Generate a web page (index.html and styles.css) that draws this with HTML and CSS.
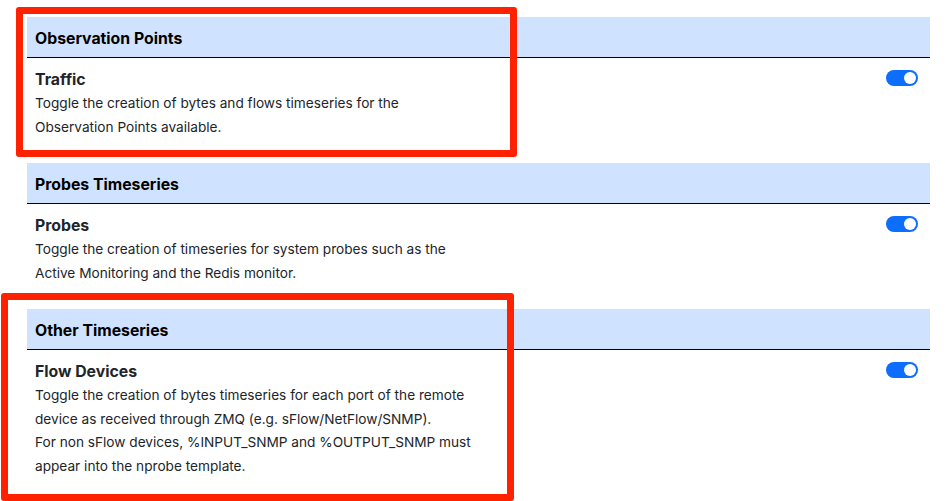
FILE: index.html
```html
<!DOCTYPE html>
<html>
<head>
<meta charset="utf-8">
<link rel="stylesheet" href="styles.css">
</head>
<body>
<div class="page">
  <div class="table">
    <section class="group">
      <div class="group-head">Observation Points</div>
      <div class="pref">
        <div class="pref-text">
          <div class="pref-title">Traffic</div>
          <div class="pref-desc">Toggle the creation of bytes and flows timeseries for the<br>Observation Points available.</div>
        </div>
        <span class="switch"><span class="knob"></span></span>
      </div>
    </section>
    <section class="group">
      <div class="group-head">Probes Timeseries</div>
      <div class="pref">
        <div class="pref-text">
          <div class="pref-title">Probes</div>
          <div class="pref-desc">Toggle the creation of timeseries for system probes such as the<br>Active Monitoring and the Redis monitor.</div>
        </div>
        <span class="switch"><span class="knob"></span></span>
      </div>
    </section>
    <section class="group">
      <div class="group-head">Other Timeseries</div>
      <div class="pref">
        <div class="pref-text">
          <div class="pref-title">Flow Devices</div>
          <div class="pref-desc">Toggle the creation of bytes timeseries for each port of the remote<br>device as received through ZMQ (e.g. sFlow/NetFlow/SNMP).<br>For non sFlow devices, %INPUT_SNMP and %OUTPUT_SNMP must<br>appear into the nprobe template.</div>
        </div>
        <span class="switch"><span class="knob"></span></span>
      </div>
    </section>
  </div>
  <div class="mark mark-1"></div>
  <div class="mark mark-2"></div>
</div>
</body>
</html>
```
FILE: styles.css
```css
html, body {
  margin: 0;
  padding: 0;
  background: #fff;
  overflow: hidden;
}
body {
  font-family: Inter, "Noto Sans", "Liberation Sans", sans-serif;
  color: #212529;
  font-size: 16px;
  line-height: 1.5;
}
.page {
  position: relative;
  width: 946px;
  height: 501px;
  overflow: hidden;
}
.table {
  margin: 17px 0 0 27px;
  width: 903px;
}
.group-head {
  background: #cfe2ff;
  border-bottom: 1px solid #000;
  padding: 10px 8px 6px;
  font-weight: 700;
  font-size: 15.8px;
  line-height: 24px;
  color: #000;
}
.pref {
  display: flex;
  justify-content: space-between;
  align-items: flex-start;
  padding: 10px 12px 23.6px 8px;
}
.pref-title {
  font-weight: 700;
  font-size: 15.8px;
  line-height: 24px;
}
.pref-desc {
  font-size: 13.65px;
  line-height: 23.7px;
}
.switch {
  margin-top: 2px;
  width: 32px;
  height: 16px;
  border-radius: 8px;
  background: #0d6efd;
  display: flex;
  align-items: center;
  justify-content: flex-end;
  padding-right: 2px;
  box-sizing: border-box;
}
.knob {
  width: 12px;
  height: 12px;
  border-radius: 50%;
  background: #fff;
}
.mark {
  position: absolute;
  border: 7px solid #ff2200;
  border-radius: 3px;
  box-sizing: border-box;
}
.mark-1 {
  left: 16px;
  top: 7px;
  width: 501px;
  height: 150px;
}
.mark-2 {
  left: 1px;
  top: 293px;
  width: 513px;
  height: 208px;
}
```
